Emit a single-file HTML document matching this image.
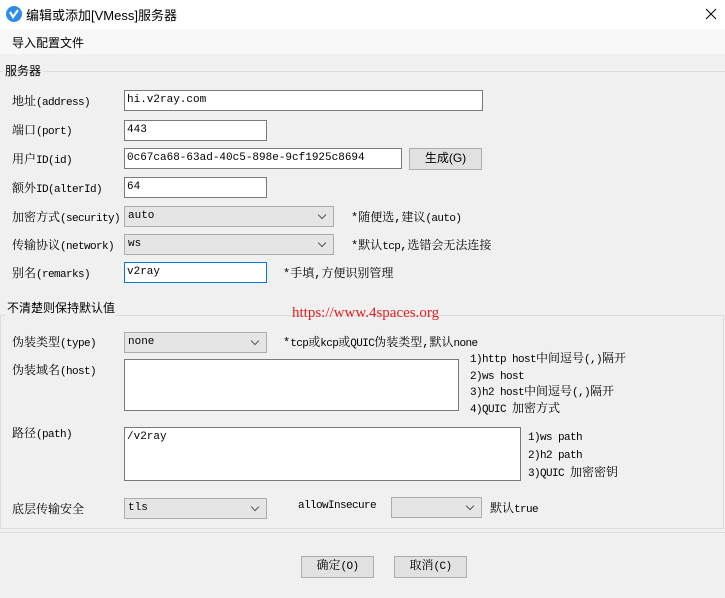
<!DOCTYPE html>
<html><head><meta charset="utf-8"><style>
*{margin:0;padding:0;box-sizing:border-box}
body{width:725px;height:598px;background:#f0f0f0;position:relative;overflow:hidden;font-family:"Liberation Mono","Noto Serif CJK SC",monospace;font-size:12px;color:#000}
.a{position:absolute;white-space:nowrap}
.m{font-size:11px;letter-spacing:-0.6px}
.ui{font-family:"Liberation Sans","Noto Sans CJK SC",sans-serif}
.in{position:absolute;background:#fff;border:1px solid #7a7a7a;height:21px;padding:2px 2px;font-size:11px;line-height:15px}
.sel{position:absolute;background:#e5e5e5;border:1px solid #adadad;height:21px;padding:2px 3px;font-size:11px;line-height:15px}
.sel::after{content:"";position:absolute;right:8px;top:5px;width:5px;height:5px;border-right:1px solid #555;border-bottom:1px solid #555;transform:rotate(45deg)}
.btn{position:absolute;background:#e1e1e1;border:1px solid #adadad;height:22px;text-align:center;line-height:19px;font-size:12px}
</style></head><body>
<div class="a" style="left:0;top:0;width:725px;height:29px;background:#fff"></div>
<svg class="a" style="left:6px;top:6px" width="16" height="16"><circle cx="8" cy="8" r="8" fill="#2d8ce8"/><path d="M4 6 L7 11 L12 4" stroke="#fff" stroke-width="2.2" fill="none"/></svg>
<div class="a ui" style="left:26px;top:5px;font-size:13px">编辑或添加[VMess]服务器</div>
<svg class="a" style="left:705px;top:8px" width="12" height="12"><path d="M1 1L11 11M11 1L1 11" stroke="#000" stroke-width="1"/></svg>
<div class="a" style="left:0;top:29px;width:725px;height:25px;background:#f8f8f8"></div>
<div class="a ui" style="left:12px;top:34px">导入配置文件</div>
<div class="a" style="left:0;top:71px;width:725px;border-top:1px solid #dcdcdc"></div>
<div class="a ui" style="left:3px;top:62px;background:#f0f0f0;padding:0 2px">服务器</div>

<div class="a" style="left:12px;top:92px">地址<span class="m">(address)</span></div>
<div class="in" style="left:124px;top:90px;width:359px">hi.v2ray.com</div>
<div class="a" style="left:12px;top:121px">端口<span class="m">(port)</span></div>
<div class="in" style="left:124px;top:120px;width:143px">443</div>
<div class="a" style="left:12px;top:150px">用户<span class="m">ID(id)</span></div>
<div class="in" style="left:124px;top:148px;width:278px">0c67ca68-63ad-40c5-898e-9cf1925c8694</div>
<div class="btn ui" style="left:409px;top:148px;width:73px">生成(G)</div>
<div class="a" style="left:12px;top:179px">额外<span class="m">ID(alterId)</span></div>
<div class="in" style="left:124px;top:177px;width:143px">64</div>
<div class="a" style="left:12px;top:208px">加密方式<span class="m">(security)</span></div>
<div class="sel" style="left:124px;top:206px;width:210px">auto</div>
<div class="a" style="left:351px;top:208px">*随便选,建议<span class="m">(auto)</span></div>
<div class="a" style="left:12px;top:236px">传输协议<span class="m">(network)</span></div>
<div class="sel" style="left:124px;top:234px;width:210px">ws</div>
<div class="a" style="left:351px;top:236px">*默认<span class="m">tcp</span>,选错会无法连接</div>
<div class="a" style="left:12px;top:264px">别名<span class="m">(remarks)</span></div>
<div class="in" style="left:124px;top:262px;width:143px;border-color:#0078d7">v2ray</div>
<div class="a" style="left:283px;top:264px">*手填,方便识别管理</div>

<div class="a" style="left:0;top:315px;width:724px;height:214px;border:1px solid #dcdcdc"></div>
<div class="a ui" style="left:6px;top:299px;background:#f0f0f0;padding:0 1px">不清楚则保持默认值</div>
<div class="a" style="left:292px;top:305px;color:#e02020;font-family:'Liberation Serif',serif;font-size:15px">https://www.4spaces.org</div>
<div class="a" style="left:12px;top:333px">伪装类型<span class="m">(type)</span></div>
<div class="sel" style="left:124px;top:332px;width:143px">none</div>
<div class="a" style="left:283px;top:333px">*<span class="m">tcp</span>或<span class="m">kcp</span>或<span class="m">QUIC</span>伪装类型,默认<span class="m">none</span></div>
<div class="a" style="left:12px;top:361px">伪装域名<span class="m">(host)</span></div>
<div class="in" style="left:124px;top:359px;width:335px;height:52px"></div>
<div class="a" style="left:470px;top:352px;line-height:15.7px"><span class="m">1)http host</span>中间逗号<span class="m">(,)</span>隔开<br><span class="m">2)ws host</span><br><span class="m">3)h2 host</span>中间逗号<span class="m">(,)</span>隔开<br><span class="m">4)QUIC </span>加密方式</div>
<div class="a" style="left:12px;top:424px">路径<span class="m">(path)</span></div>
<div class="in" style="left:124px;top:427px;width:397px;height:54px">/v2ray</div>
<div class="a" style="left:528px;top:429px;line-height:17px"><span class="m">1)ws path</span><br><span class="m">2)h2 path</span><br><span class="m">3)QUIC </span>加密密钥</div>
<div class="a" style="left:12px;top:500px">底层传输安全</div>
<div class="sel" style="left:124px;top:498px;width:143px">tls</div>
<div class="a m" style="left:298px;top:500px">allowInsecure</div>
<div class="sel" style="left:391px;top:497px;width:91px"></div>
<div class="a" style="left:490px;top:499px">默认<span class="m">true</span></div>
<div class="a" style="left:0;top:532px;width:725px;border-top:1px solid #dcdcdc"></div>
<div class="btn" style="left:301px;top:556px;width:73px">确定<span class="m">(O)</span></div>
<div class="btn" style="left:394px;top:556px;width:73px">取消<span class="m">(C)</span></div>
</body></html>
